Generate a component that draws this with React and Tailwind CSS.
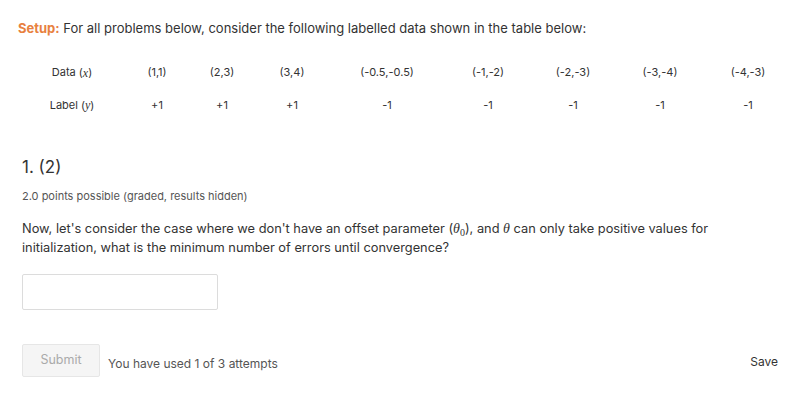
const cols = [
  { w: 'w-[84px]', data: <>Data (<i className="font-['Liberation_Serif'] text-[12px]">x</i>)</>, label: <>Label (<i className="font-['Liberation_Serif'] text-[12px]">y</i>)</> },
  { w: 'w-[86px]', data: '(1,1)', label: '+1' },
  { w: 'w-[44px]', data: '(2,3)', label: '+1' },
  { w: 'w-[96px]', data: '(3,4)', label: '+1' },
  { w: 'w-[94px]', data: '(-0.5,-0.5)', label: '-1' },
  { w: 'w-[108px]', data: '(-1,-2)', label: '-1' },
  { w: 'w-[62px]', data: '(-2,-3)', label: '-1' },
  { w: 'w-[112px]', data: '(-3,-4)', label: '-1' },
  { w: 'w-[64px]', data: '(-4,-3)', label: '-1' },
];

function DataTable() {
  return (
    <div className="ml-[12px] mt-[18px] flex text-[11px] text-[#333]">
      {cols.map((c, i) => (
        <div key={i} className={`${c.w} shrink-0 flex flex-col`}>
          <div className="h-[33px] flex items-center justify-center whitespace-nowrap">{c.data}</div>
          <div className="h-[32px] flex items-center justify-center whitespace-nowrap">{c.label}</div>
        </div>
      ))}
    </div>
  );
}

export default function App() {
  return (
    <div className="w-[812px] h-[417px] bg-white font-['Inter',sans-serif] text-[#333] px-[18px] pt-[18px] overflow-hidden">
      <p className="text-[13px] leading-[20px]">
        <span className="font-bold text-[#e8813f]">Setup:</span> For all problems below, consider the following labelled data shown in the table below:
      </p>

      <DataTable />

      <div className="pl-[4px]">
        <h3 className="mt-[34px] text-[17px] leading-[24px] font-normal text-[#333]">1. (2)</h3>
        <div className="mt-[9px] text-[11px] leading-[16px] text-[#555]">2.0 points possible (graded, results hidden)</div>

        <p className="mt-[15px] text-[12.8px] leading-[19px] text-[#333]">
          Now, let's consider the case where we don't have an offset parameter (
          <i className="font-['Liberation_Serif'] text-[14px]">θ</i><sub className="text-[10px] font-['Liberation_Serif']">0</sub>), and{' '}
          <i className="font-['Liberation_Serif'] text-[14px]">θ</i> can only take positive values for
          <br />
          initialization, what is the minimum number of errors until convergence?
        </p>

        <input
          type="text"
          className="mt-[17px] block w-[196px] h-[36px] border border-[#dcdcdc] rounded-[2px] bg-white outline-none"
        />

        <div className="mt-[34px] flex items-start">
          <button className="w-[78px] h-[33px] bg-[#f5f5f5] border border-[#e6e6e6] rounded-[2px] text-[12.5px] text-[#aaa]">
            Submit
          </button>
          <span className="ml-[8px] pt-[12px] leading-[16px] text-[12px] text-[#555]">You have used 1 of 3 attempts</span>
          <span className="ml-auto mr-[16px] pt-[10px] leading-[16px] text-[12px] text-[#333]">Save</span>
        </div>
      </div>
    </div>
  );
}
